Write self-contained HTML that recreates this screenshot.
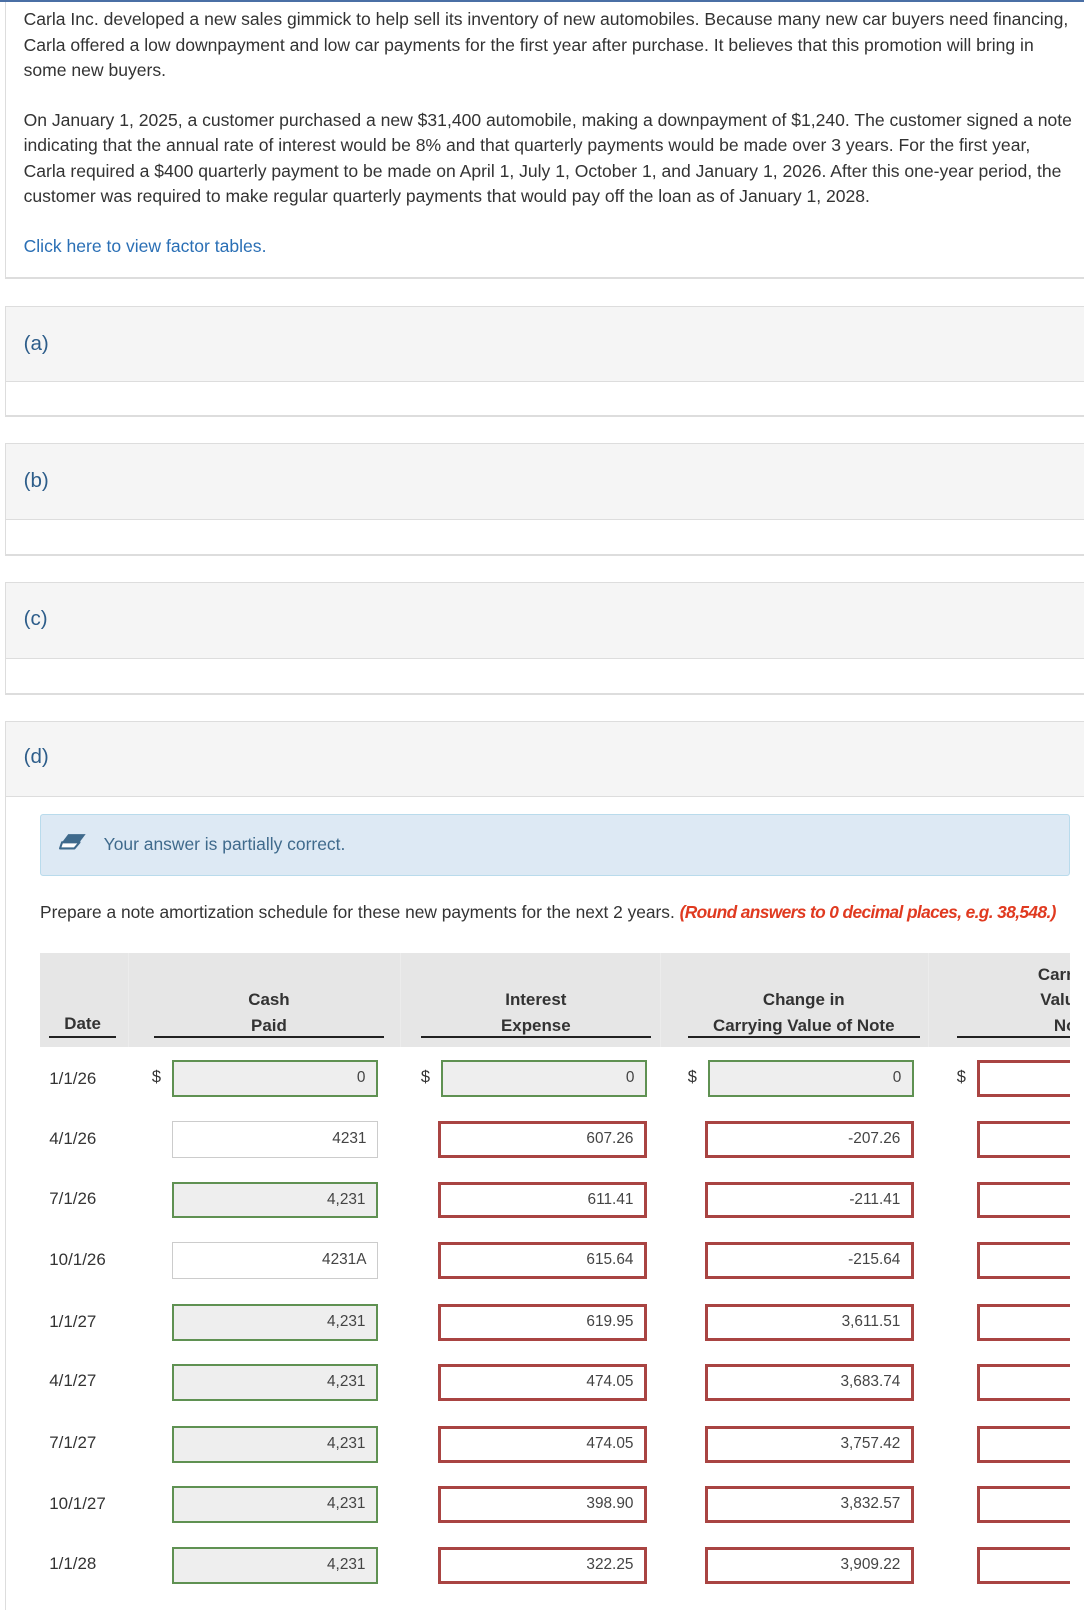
<!DOCTYPE html>
<html><head><meta charset="utf-8">
<style>
html,body{margin:0;padding:0;background:#fff;overflow:hidden;width:1084px;height:1610px}
#w{zoom:1.0265;position:relative;width:1056px;height:1570px;font-family:"Liberation Sans",sans-serif;color:#333;font-size:16px}
.a{position:absolute;white-space:nowrap}
.topline{left:0;top:0;width:1056px;height:2px;background:#4a6fa5}
.card{left:5px;border-left:1px solid #ddd;border-bottom:2px solid #ddd;width:1060px}
.gray{background:#f5f5f5;border-top:1px solid #ddd;border-bottom:1px solid #ddd}
.lbl{color:#2d5d8a;font-size:20px}
.in{position:absolute;box-sizing:border-box;height:36px;text-align:right;padding-right:10px;line-height:32px;font-size:15px;color:#444}
.g{border:2px solid #5f9152;background:#eee}
.r{border:3px solid #a94442;background:#fff;line-height:30px}
.w{border:1px solid #ccc;background:#fff;line-height:34px}
.hd{font-weight:bold;font-size:16.5px;text-align:center;color:#333}
.ul{position:absolute;height:2px;background:#222}
.dt{font-size:16.5px}
</style></head><body><div id="w">
<div class="a topline"></div>
<div class="a card" style="top:2px;height:268px"></div>
<div class="a" style="left:23px;top:7px;line-height:25px;font-size:17.1px">Carla Inc. developed a new sales gimmick to help sell its inventory of new automobiles. Because many new car buyers need financing,<br>Carla offered a low downpayment and low car payments for the first year after purchase. It believes that this promotion will bring in<br>some new buyers.</div>
<div class="a" style="left:23px;top:105px;line-height:24.7px;font-size:17.1px">On January 1, 2025, a customer purchased a new $31,400 automobile, making a downpayment of $1,240. The customer signed a note<br>indicating that the annual rate of interest would be 8% and that quarterly payments would be made over 3 years. For the first year,<br>Carla required a $400 quarterly payment to be made on April 1, July 1, October 1, and January 1, 2026. After this one-year period, the<br>customer was required to make regular quarterly payments that would pay off the loan as of January 1, 2028.</div>
<div class="a" style="left:23px;top:230px;color:#2a6fb5;font-size:17.1px">Click here to view factor tables.</div>

<div class="a card" style="top:298px;height:106px"><div class="gray" style="height:72px"></div></div>
<div class="a lbl" style="left:23px;top:323px">(a)</div>
<div class="a card" style="top:432px;height:108px"><div class="gray" style="height:73px"></div></div>
<div class="a lbl" style="left:23px;top:457px">(b)</div>
<div class="a card" style="top:567px;height:108px"><div class="gray" style="height:73px"></div></div>
<div class="a lbl" style="left:23px;top:591px">(c)</div>
<div class="a" style="left:5px;top:702px;width:1060px;height:900px;border-left:1px solid #ddd"><div class="gray" style="height:72px"></div></div>
<div class="a lbl" style="left:23px;top:726px">(d)</div>

<div class="a" style="left:39px;top:793px;width:1001px;height:58px;background:#dde9f4;border:1px solid #b9dbec;border-radius:3px"></div>
<svg class="a" style="left:57px;top:810px" width="28" height="22" viewBox="0 0 28 22"><path d="M9 3 H26 L20 11 H3 Z" fill="#3f6a8c"/><path d="M3 11 H20 L15 17 H1 Z" fill="#fff" stroke="#3f6a8c" stroke-width="2" stroke-linejoin="round"/></svg>
<div class="a" style="left:101px;top:812px;color:#3f6a8c;font-size:17px">Your answer is partially correct.</div>
<div class="a" style="left:39px;top:879px;font-size:16.9px">Prepare a note amortization schedule for these new payments for the next 2 years. <b style="color:#e03a20;font-style:italic;letter-spacing:-0.6px">(Round answers to 0 decimal places, e.g. 38,548.)</b></div>

<div class="a" style="left:39px;top:928px;width:1003px;height:92px;background:#e6e6e6"></div>
<div class="a" style="left:125px;top:928px;width:1px;height:92px;background:#ececec"></div>
<div class="a" style="left:390px;top:928px;width:1px;height:92px;background:#ececec"></div>
<div class="a" style="left:643px;top:928px;width:1px;height:92px;background:#ececec"></div>
<div class="a" style="left:904px;top:928px;width:1px;height:92px;background:#ececec"></div>
<div class="a hd" style="left:48px;top:988px;width:65px">Date</div>
<div class="ul" style="left:48px;top:1009px;width:65px"></div>
<div class="a hd" style="left:150px;top:962px;width:224px;line-height:25px">Cash<br>Paid</div>
<div class="ul" style="left:150px;top:1009px;width:224px"></div>
<div class="a hd" style="left:410px;top:962px;width:224px;line-height:25px">Interest<br>Expense</div>
<div class="ul" style="left:410px;top:1009px;width:224px"></div>
<div class="a hd" style="left:670px;top:962px;width:226px;line-height:25px">Change in<br>Carrying Value of Note</div>
<div class="ul" style="left:670px;top:1009px;width:226px"></div>
<div class="a" style="left:932px;top:0;width:110px;height:1570px;overflow:hidden">
  <div class="a hd" style="left:0;top:937px;width:226px;line-height:25px">Carrying<br>Value of<br>Note</div>
  <div class="ul" style="left:0;top:1009px;width:150px"></div>
</div>

<div class="a" style="left:0;top:0;width:1042px;height:1570px;overflow:hidden">
<div class="a" style="left:148px;top:1040px">$</div>
<div class="a" style="left:410px;top:1040px">$</div>
<div class="a" style="left:670px;top:1040px">$</div>
<div class="a" style="left:932px;top:1040px">$</div>

<div class="a dt" style="left:48px;top:1041px">1/1/26</div>
<div class="in g" style="left:168px;top:1033px;width:200px">0</div>
<div class="in g" style="left:430px;top:1033px;width:200px">0</div>
<div class="in g" style="left:690px;top:1033px;width:200px">0</div>
<div class="in r" style="left:952px;top:1033px;width:120px"></div>

<div class="a dt" style="left:48px;top:1100px">4/1/26</div>
<div class="in w" style="left:168px;top:1092px;width:200px">4231</div>
<div class="in r" style="left:427px;top:1092px;width:203px">607.26</div>
<div class="in r" style="left:687px;top:1092px;width:203px">-207.26</div>
<div class="in r" style="left:952px;top:1092px;width:120px"></div>

<div class="a dt" style="left:48px;top:1158px">7/1/26</div>
<div class="in g" style="left:168px;top:1151px;width:200px">4,231</div>
<div class="in r" style="left:427px;top:1151px;width:203px">611.41</div>
<div class="in r" style="left:687px;top:1151px;width:203px">-211.41</div>
<div class="in r" style="left:952px;top:1151px;width:120px"></div>

<div class="a dt" style="left:48px;top:1218px">10/1/26</div>
<div class="in w" style="left:168px;top:1210px;width:200px">4231A</div>
<div class="in r" style="left:427px;top:1210px;width:203px">615.64</div>
<div class="in r" style="left:687px;top:1210px;width:203px">-215.64</div>
<div class="in r" style="left:952px;top:1210px;width:120px"></div>

<div class="a dt" style="left:48px;top:1278px">1/1/27</div>
<div class="in g" style="left:168px;top:1270px;width:200px">4,231</div>
<div class="in r" style="left:427px;top:1270px;width:203px">619.95</div>
<div class="in r" style="left:687px;top:1270px;width:203px">3,611.51</div>
<div class="in r" style="left:952px;top:1270px;width:120px"></div>

<div class="a dt" style="left:48px;top:1336px">4/1/27</div>
<div class="in g" style="left:168px;top:1329px;width:200px">4,231</div>
<div class="in r" style="left:427px;top:1329px;width:203px">474.05</div>
<div class="in r" style="left:687px;top:1329px;width:203px">3,683.74</div>
<div class="in r" style="left:952px;top:1329px;width:120px"></div>

<div class="a dt" style="left:48px;top:1396px">7/1/27</div>
<div class="in g" style="left:168px;top:1389px;width:200px">4,231</div>
<div class="in r" style="left:427px;top:1389px;width:203px">474.05</div>
<div class="in r" style="left:687px;top:1389px;width:203px">3,757.42</div>
<div class="in r" style="left:952px;top:1389px;width:120px"></div>

<div class="a dt" style="left:48px;top:1455px">10/1/27</div>
<div class="in g" style="left:168px;top:1448px;width:200px">4,231</div>
<div class="in r" style="left:427px;top:1448px;width:203px">398.90</div>
<div class="in r" style="left:687px;top:1448px;width:203px">3,832.57</div>
<div class="in r" style="left:952px;top:1448px;width:120px"></div>

<div class="a dt" style="left:48px;top:1514px">1/1/28</div>
<div class="in g" style="left:168px;top:1507px;width:200px">4,231</div>
<div class="in r" style="left:427px;top:1507px;width:203px">322.25</div>
<div class="in r" style="left:687px;top:1507px;width:203px">3,909.22</div>
<div class="in r" style="left:952px;top:1507px;width:120px"></div>
</div>
</div></body></html>
